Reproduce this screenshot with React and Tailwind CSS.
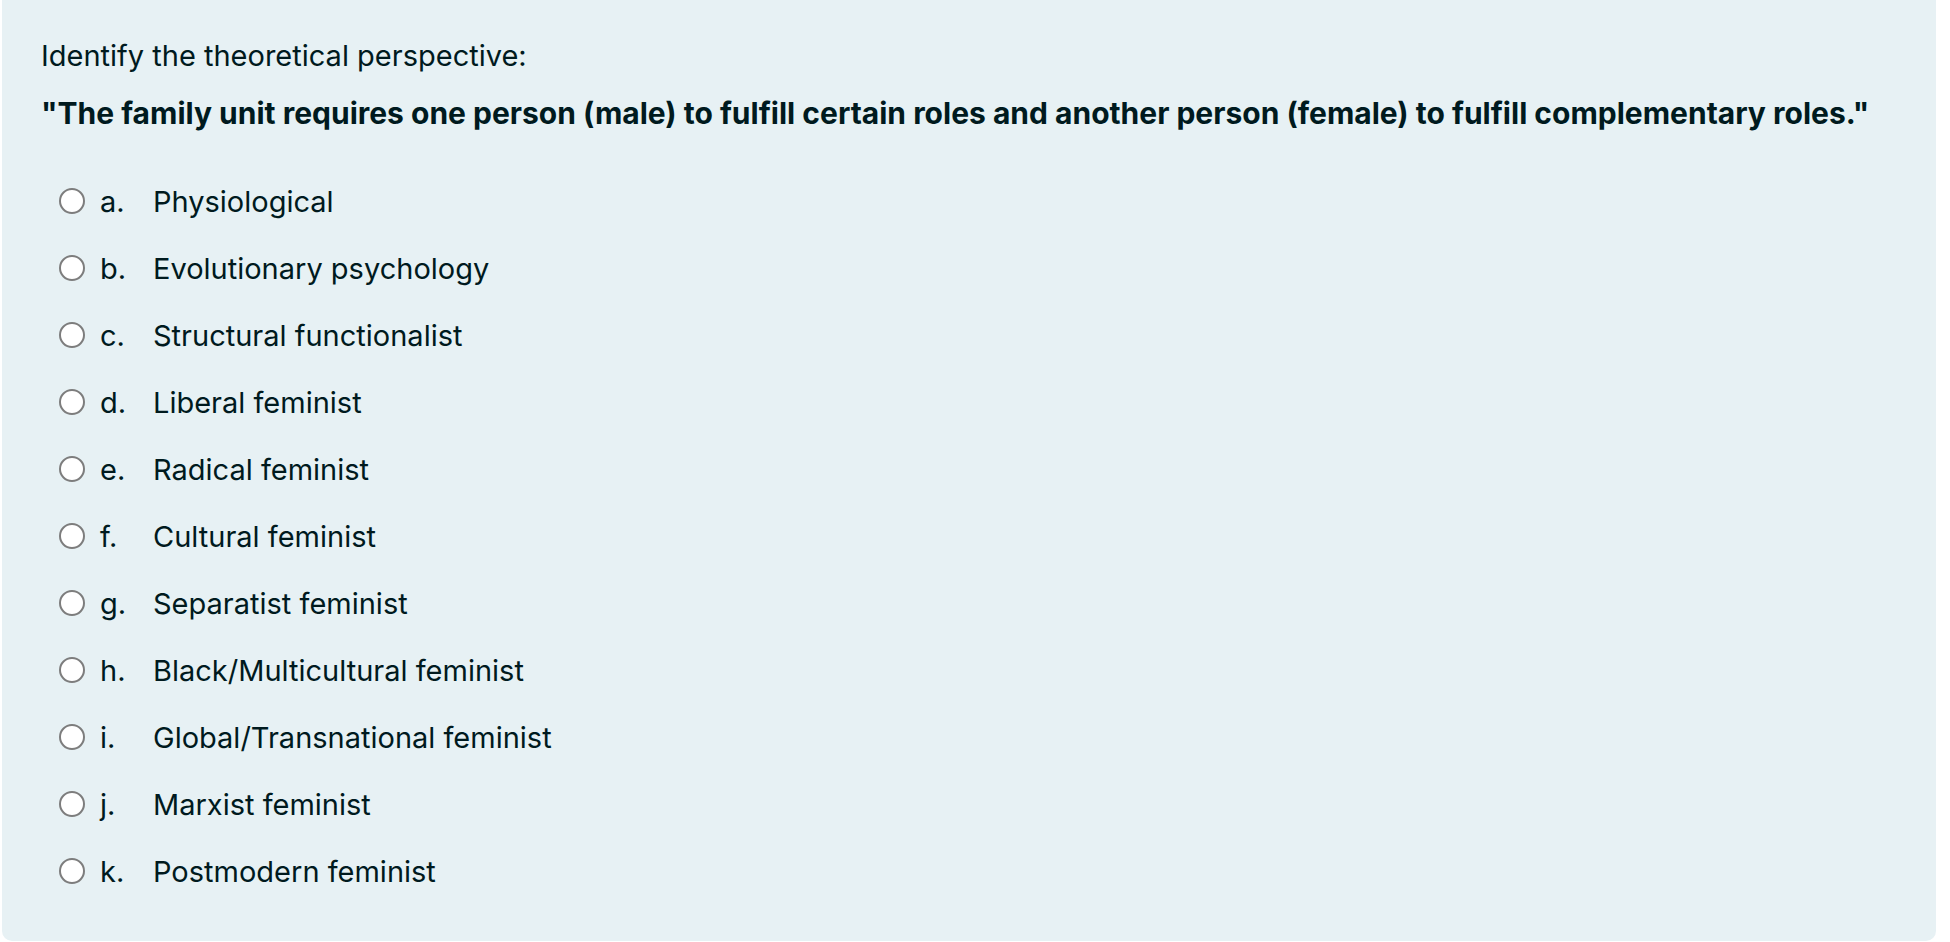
import React from "react";

const options = [
  ["a.", "Physiological"],
  ["b.", "Evolutionary psychology"],
  ["c.", "Structural functionalist"],
  ["d.", "Liberal feminist"],
  ["e.", "Radical feminist"],
  ["f.", "Cultural feminist"],
  ["g.", "Separatist feminist"],
  ["h.", "Black/Multicultural feminist"],
  ["i.", "Global/Transnational feminist"],
  ["j.", "Marxist feminist"],
  ["k.", "Postmodern feminist"],
];

export default function App() {
  return (
    <div
      className="w-[1950px] h-[942px] bg-white overflow-hidden text-[#001a1e]"
      style={{ fontFamily: "Inter, 'Noto Sans', sans-serif" }}
    >
      <div className="ml-[2px] w-[1934px] h-[941px] bg-[#e7f1f4] rounded-b-[10px] pl-[39px] pt-[36px]">
        <p className="text-[29px] leading-[40px]">Identify the theoretical perspective:</p>
        <p className="mt-[17px] text-[30px] leading-[40px] font-bold">
          "The family unit requires one person (male) to fulfill certain roles and another person (female) to fulfill complementary roles."
        </p>
        <div className="mt-[34px] flex flex-col">
          {options.map(([letter, text]) => (
            <label key={letter} className="flex items-center h-[67px]">
              <span className="ml-[18px] w-[26px] h-[26px] rounded-full border-2 border-[#7d7d7d] bg-white shrink-0" />
              <span className="ml-[15px] w-[53px] text-[29px] leading-[40px] mt-[3px]">{letter}</span>
              <span className="text-[29px] leading-[40px] mt-[3px]">{text}</span>
            </label>
          ))}
        </div>
      </div>
    </div>
  );
}
